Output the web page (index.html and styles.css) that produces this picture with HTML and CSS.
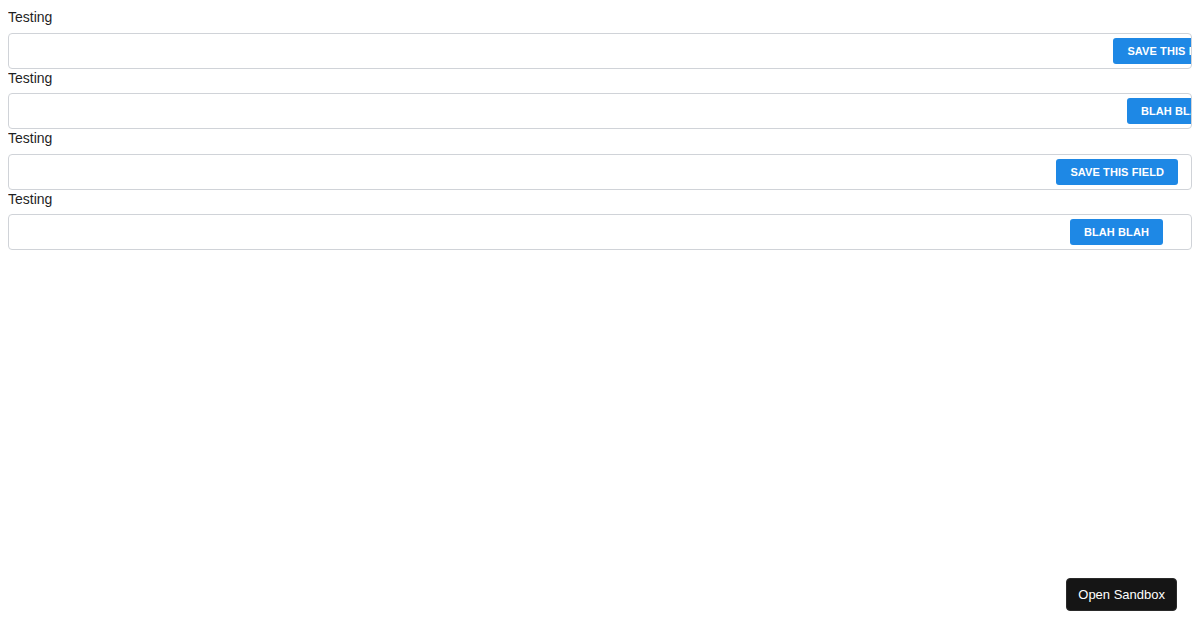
FILE: index.html
```html
<!DOCTYPE html>
<html lang="en">
<head>
<meta charset="utf-8">
<title>Testing</title>
<link rel="stylesheet" href="styles.css">
</head>
<body>
  <div class="field">
    <label class="label">Testing</label>
    <div class="box">
      <button class="btn shift-a">Save this field</button>
    </div>
  </div>
  <div class="field">
    <label class="label">Testing</label>
    <div class="box">
      <button class="btn shift-b">Blah blah</button>
    </div>
  </div>
  <div class="field">
    <label class="label">Testing</label>
    <div class="box">
      <button class="btn shift-c">Save this field</button>
    </div>
  </div>
  <div class="field">
    <label class="label">Testing</label>
    <div class="box">
      <button class="btn shift-d">Blah blah</button>
    </div>
  </div>
  <button class="sandbox">Open Sandbox</button>
</body>
</html>
```
FILE: styles.css
```css
html, body {
  background: #ffffff;
}
body {
  margin: 8px;
  font-family: "Liberation Sans", Arial, sans-serif;
  color: #222222;
}
.field {
  display: flex;
  flex-direction: column;
}
.label {
  display: block;
  font-size: 14px;
  line-height: 19px;
  margin-bottom: 5.5px;
  color: #1f1f1f;
}
.box {
  height: 36px;
  box-sizing: border-box;
  border: 1px solid #d0d3d8;
  border-radius: 4px;
  display: flex;
  align-items: center;
  justify-content: flex-end;
  overflow: hidden;
}
.btn {
  flex: none;
  height: 26px;
  padding: 0 14px;
  border: none;
  border-radius: 3px;
  background: #1e88e5;
  color: #ffffff;
  font-family: "Liberation Sans", Arial, sans-serif;
  font-weight: bold;
  font-size: 11px;
  letter-spacing: 0.1px;
  text-transform: uppercase;
  cursor: pointer;
}
.shift-a { margin-right: -44px; }
.shift-b { margin-right: -29px; }
.shift-c { margin-right: 13px; }
.shift-d { margin-right: 28px; }
.sandbox {
  position: fixed;
  right: 23px;
  bottom: 19px;
  height: 33px;
  padding: 0 11px;
  background: #151515;
  color: #ffffff;
  border: 1px solid #2a2a2a;
  border-radius: 4px;
  font-family: "Liberation Sans", Arial, sans-serif;
  font-size: 13px;
}
```
